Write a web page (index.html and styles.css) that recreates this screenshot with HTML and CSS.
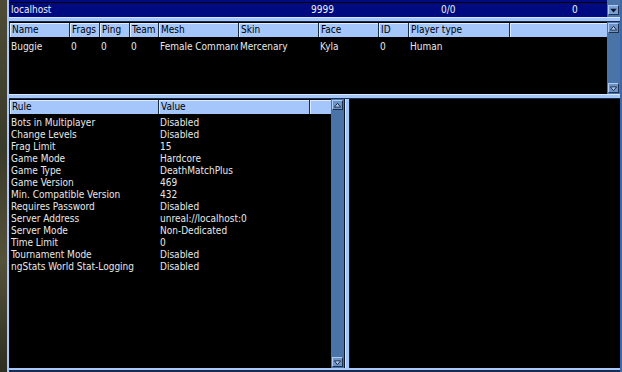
FILE: index.html
```html
<!DOCTYPE html>
<html lang="en">
<head>
  <meta charset="UTF-8">
  <title>Server Info</title>
  <link rel="stylesheet" href="styles.css">
</head>
<body>
<div class="app">
  <div class="backdrop"></div>
  <div class="main">

    <!-- server list, scrolled to the last row -->
    <div class="servers">
      <div class="server-list">
        <div class="srow">
          <span class="c-name">Unreal Tournament (Multiplayer) DeathMatch</span>
          <span class="c-port">7777</span>
          <span class="c-pl">0/0</span>
          <span class="c-ping">0</span>
        </div>
        <div class="srow">
          <span class="c-name">localhost</span>
          <span class="c-port">9999</span>
          <span class="c-pl">0/0</span>
          <span class="c-ping">0</span>
        </div>
      </div>
      <div class="vscroll">
        <span class="sbtn down"><svg width="11" height="9" viewBox="0 0 11 9"><path d="M1.5 2.5h8L5.5 7z" fill="#0a1428"/></svg></span>
      </div>
    </div>

    <div class="hsplit"></div>

    <!-- players -->
    <div class="players">
      <div class="grid">
        <div class="head">
          <span class="h" style="width:60px">Name</span>
          <span class="h" style="width:30px">Frags</span>
          <span class="h" style="width:30px">Ping</span>
          <span class="h" style="width:29px">Team</span>
          <span class="h" style="width:80px">Mesh</span>
          <span class="h" style="width:80px">Skin</span>
          <span class="h" style="width:60px">Face</span>
          <span class="h" style="width:30px">ID</span>
          <span class="h" style="width:101px">Player type</span>
          <span class="h fill"></span>
        </div>
        <div class="prow">
          <span style="width:60px">Buggie</span>
          <span style="width:30px">0</span>
          <span style="width:30px">0</span>
          <span style="width:29px">0</span>
          <span style="width:80px">Female Commando</span>
          <span style="width:80px">Mercenary</span>
          <span style="width:60px">Kyla</span>
          <span style="width:30px">0</span>
          <span style="width:101px">Human</span>
        </div>
      </div>
      <div class="vscroll">
        <span class="sbtn"><svg width="11" height="9" viewBox="0 0 11 9"><path d="M5.5 1.8L9.3 6.5H1.7z" fill="#b4d0f8" stroke="#0a1428"/></svg></span>
        <span class="sbtn"><svg width="11" height="9" viewBox="0 0 11 9"><path d="M5.5 7.2L9.3 2.5H1.7z" fill="#b4d0f8" stroke="#0a1428"/></svg></span>
      </div>
    </div>

    <div class="hsplit"></div>

    <!-- rules + empty pane -->
    <div class="bottom">
      <div class="rules">
        <div class="grid">
          <div class="head">
            <span class="h" style="width:149px">Rule</span>
            <span class="h" style="width:151px">Value</span>
            <span class="h fill"></span>
          </div>
          <div class="rule-list">
            <div class="rrow"><span>Bots in Multiplayer</span><span>Disabled</span></div>
            <div class="rrow"><span>Change Levels</span><span>Disabled</span></div>
            <div class="rrow"><span>Frag Limit</span><span>15</span></div>
            <div class="rrow"><span>Game Mode</span><span>Hardcore</span></div>
            <div class="rrow"><span>Game Type</span><span>DeathMatchPlus</span></div>
            <div class="rrow"><span>Game Version</span><span>469</span></div>
            <div class="rrow"><span>Min. Compatible Version</span><span>432</span></div>
            <div class="rrow"><span>Requires Password</span><span>Disabled</span></div>
            <div class="rrow"><span>Server Address</span><span>unreal://localhost:0</span></div>
            <div class="rrow"><span>Server Mode</span><span>Non-Dedicated</span></div>
            <div class="rrow"><span>Time Limit</span><span>0</span></div>
            <div class="rrow"><span>Tournament Mode</span><span>Disabled</span></div>
            <div class="rrow"><span>ngStats World Stat-Logging</span><span>Disabled</span></div>
          </div>
        </div>
        <div class="vscroll">
          <span class="sbtn"><svg width="11" height="9" viewBox="0 0 11 9"><path d="M5.5 1.8L9.3 6.5H1.7z" fill="#b4d0f8" stroke="#0a1428"/></svg></span>
          <span class="sbtn"><svg width="11" height="9" viewBox="0 0 11 9"><path d="M5.5 7.2L9.3 2.5H1.7z" fill="#b4d0f8" stroke="#0a1428"/></svg></span>
        </div>
      </div>
      <div class="vsplit"></div>
      <div class="pane"></div>
    </div>

    <div class="bottom-edge"></div>
  </div>
</div>
</body>
</html>
```

FILE: styles.css
```css
* {
  box-sizing: border-box;
}

body {
  margin: 0;
  width: 622px;
  height: 372px;
  overflow: hidden;
  background: #000;
  font-family: 'DejaVu Sans Condensed', 'Liberation Sans', Arial, sans-serif;
  font-size: 10px;
  color: #e8e8e8;
}

.app {
  display: flex;
  height: 372px;
}

/* game scene peeking out on the left */
.backdrop {
  width: 7px;
  background: linear-gradient(180deg, #4e4c36 0%, #3a3a2a 40%, #55523a 70%, #2e2e22 100%);
}

.main {
  flex: 1;
  display: flex;
  flex-direction: column;
  border-left: 2px solid #a8c8f8;
  border-right: 2px solid #3c68a8;
}

/* server list */
.servers {
  height: 17px;
  display: flex;
  overflow: hidden;
}

.server-list {
  flex: 1;
  overflow: hidden;
}

.server-list .srow:first-child {
  margin-top: -12px;
  margin-bottom: 1px;
}

.srow {
  height: 14px;
  line-height: 14px;
  display: flex;
  background: #000a80;
  color: #f0f0f0;
  white-space: nowrap;
}

.c-name { width: 300px; padding-left: 2px; overflow: hidden; }
.c-port { width: 130px; padding-left: 2px; }
.c-pl { width: 131px; padding-left: 2px; }
.c-ping { padding-left: 2px; }

/* scrollbars */
.vscroll {
  width: 13px;
  background: #4a74a8;
  display: flex;
  flex-direction: column;
  justify-content: space-between;
  padding: 1px 0 1px 1px;
}

.servers .vscroll {
  justify-content: flex-end;
  padding-bottom: 2px;
}

.sbtn {
  width: 11px;
  height: 10px;
  display: flex;
  align-items: center;
  justify-content: center;
  background: #6c94c8;
  border-top: 1px solid #b0ccf4;
  border-left: 1px solid #b0ccf4;
  border-right: 1px solid #1c3050;
  border-bottom: 1px solid #1c3050;
}

.sbtn.down {
  background: #7aa0d4;
}

/* splitters */
.hsplit {
  height: 5px;
  background: #a4c6f8;
  border-top: 1px solid #d4e6ff;
  border-bottom: 1px solid #1a2c50;
}

.vsplit {
  width: 6px;
  background: #a4c6f8;
  border-left: 1px solid #0c1830;
  border-right: 1px solid #0c1830;
  box-shadow: inset 1px 0 #d4e6ff;
}

/* grids with column headers */
.players {
  height: 72px;
  display: flex;
}

.grid {
  flex: 1;
  padding-top: 1px;
  overflow: hidden;
}

.head {
  display: flex;
  height: 14px;
}

.h {
  height: 14px;
  line-height: 13px;
  padding-left: 2px;
  color: #000;
  background: #a4c6fa;
  border-left: 1px solid #1a2c50;
  box-shadow: inset 1px 1px #dcebff;
  white-space: nowrap;
  overflow: hidden;
}

.h.fill {
  flex: 1;
}

.prow {
  display: flex;
  height: 14px;
  line-height: 14px;
  margin-top: 3px;
  white-space: nowrap;
}

.prow span {
  padding-left: 2px;
  overflow: hidden;
}

.bottom {
  flex: 1;
  display: flex;
}

.rules {
  width: 335px;
  display: flex;
}

.rule-list {
  padding-top: 3px;
}

.rrow {
  display: flex;
  height: 12px;
  line-height: 12px;
  white-space: nowrap;
}

.rrow span {
  padding-left: 2px;
}

.rrow span:first-child {
  width: 149px;
}

.pane {
  flex: 1;
  background: #000;
}

.bottom-edge {
  height: 4px;
  border-top: 2px solid #a8c8f8;
  background: #1a2c50;
}
```
